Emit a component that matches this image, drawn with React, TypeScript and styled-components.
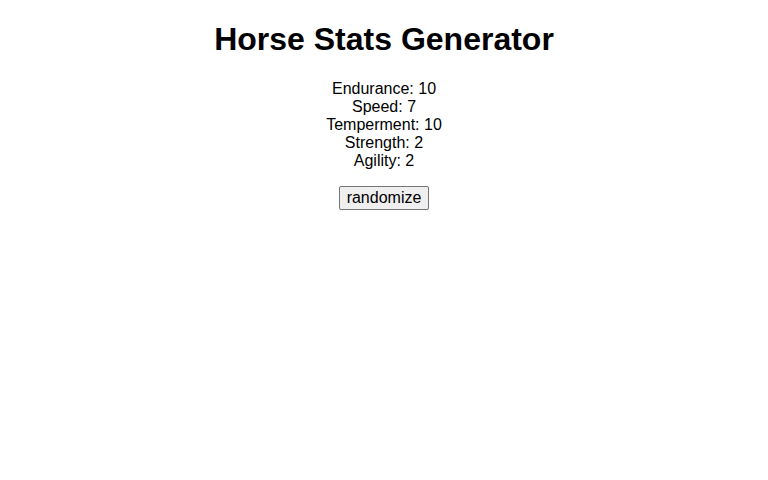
import React, { useState } from 'react'
import styled, { createGlobalStyle } from 'styled-components'

type Stats = {
  endurance: number
  speed: number
  temperment: number
  strength: number
  agility: number
}

const roll = () => Math.floor(Math.random() * 10) + 1

const GlobalStyle = createGlobalStyle`
  body {
    margin: 0;
    background: #ffffff;
    color: #000000;
    font-family: "Liberation Sans", Arial, sans-serif;
  }
`

const App = () => {
  const [stats, setStats] = useState<Stats>({
    endurance: 10,
    speed: 7,
    temperment: 10,
    strength: 2,
    agility: 2,
  })

  const randomize = () =>
    setStats({
      endurance: roll(),
      speed: roll(),
      temperment: roll(),
      strength: roll(),
      agility: roll(),
    })

  return (
    <Page>
      <GlobalStyle />
      <Title>Horse Stats Generator</Title>
      <StatList>
        <StatLine>Endurance: {stats.endurance}</StatLine>
        <StatLine>Speed: {stats.speed}</StatLine>
        <StatLine>Temperment: {stats.temperment}</StatLine>
        <StatLine>Strength: {stats.strength}</StatLine>
        <StatLine>Agility: {stats.agility}</StatLine>
      </StatList>
      <RandomizeButton onClick={randomize}>randomize</RandomizeButton>
    </Page>
  )
}

const Page = styled.div`
  text-align: center;
`

const Title = styled.h1`
  font-size: 32px;
  font-weight: bold;
  margin: 21px 0 22px;
`

const StatList = styled.div`
  font-size: 16px;
  margin-bottom: 16px;
`

const StatLine = styled.div`
  line-height: 18px;
`

const RandomizeButton = styled.button`
  font-family: "Liberation Sans", Arial, sans-serif;
  font-size: 16px;
  color: #000000;
  background: #efefef;
  border: 1px solid #767676;
  border-radius: 2px;
  padding: 2px 7px;
  line-height: 18px;
  cursor: pointer;
`

export default App
